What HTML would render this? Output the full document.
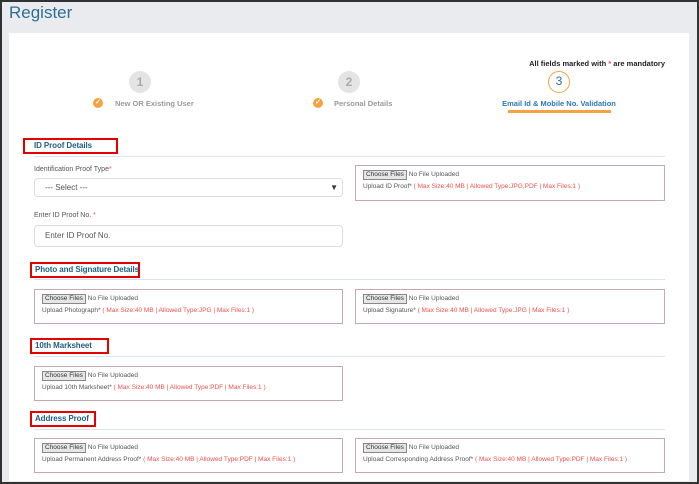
<!DOCTYPE html>
<html><head><meta charset="utf-8"><style>
*{box-sizing:border-box;margin:0;padding:0}
body{width:699px;height:484px;overflow:hidden;background:#fff;font-family:"Liberation Sans",Arial,sans-serif;position:relative}
.frame{position:absolute;left:0;top:0;width:699px;height:484px;border:2px solid #333;background:#eaebef}
.a{position:absolute;white-space:nowrap}
.title{left:9px;top:3px;font-size:17px;color:#2d6f93}
.card{left:9px;top:33px;width:680px;height:448px;background:#fff}
.circ{width:22px;height:22px;border-radius:50%;background:#e4e4e4;color:#aaa;font-size:12px;font-weight:bold;text-align:center;line-height:22px}
.chk{width:10px;height:10px;border-radius:50%;background:#f4a340;color:#fff;font-size:7px;text-align:center;line-height:10px;font-weight:bold}
.sl{font-size:7.5px;color:#999;font-weight:bold}
.h{border:2px solid #e50000;font-size:8px;font-weight:bold;color:#1f5f80;padding:0 0 0 9px;line-height:12px;letter-spacing:-0.1px}
.line{height:1px;background:#dde3ea}
.lab{font-size:7px;color:#555}
.inp{border:1px solid #ddd;border-radius:4px;font-size:8px;color:#555;padding-left:10px}
.up{border:1px solid #c7a9ad;font-size:6.5px;color:#555;padding:4px 0 0 7px;white-space:nowrap}
.btn{display:inline-block;border:1px solid #888;background:#e6e6e6;padding:0 2px;font-size:6.5px;color:#333;line-height:8px}
.r{color:#f0524f}
.up div{margin-top:3px}
</style></head><body>
<div class="frame"></div>
<div class="a title">Register</div>
<div class="a card"></div>

<div class="a" style="left:460px;top:59px;width:205px;text-align:right;font-size:7.5px;font-weight:bold;color:#222">All fields marked with <span class="r">*</span> are mandatory</div>

<div class="a circ" style="left:129px;top:71px">1</div>
<div class="a chk" style="left:93px;top:98px">✓</div>
<div class="a sl" style="left:115px;top:99px">New OR Existing User</div>
<div class="a circ" style="left:338px;top:71px">2</div>
<div class="a chk" style="left:313px;top:98px">✓</div>
<div class="a sl" style="left:334px;top:99px">Personal Details</div>
<div class="a circ" style="left:548px;top:71px;background:#fff;border:1.5px solid #f4a340;color:#2d6f93;font-weight:normal;line-height:19px">3</div>
<div class="a" style="left:500px;top:99px;width:118px;text-align:center;font-size:7.5px;font-weight:bold;color:#2b79b3">Email Id &amp; Mobile No. Validation</div>
<div class="a" style="left:508px;top:110px;width:103px;height:3px;background:#f4a340"></div>

<div class="a h" style="left:23px;top:138px;width:95px;height:16px">ID Proof Details</div>
<div class="a line" style="left:34px;top:156px;width:631px"></div>
<div class="a lab" style="left:34px;top:166px">Identification Proof Type<span class="r">*</span></div>
<div class="a inp" style="left:34px;top:178px;width:309px;height:19px;line-height:17px">--- Select ---<span style="position:absolute;right:4px;font-size:8px;color:#333">▼</span></div>
<div class="a up" style="left:355px;top:165px;width:310px;height:36px"><span class="btn">Choose Files</span> No File Uploaded<div>Upload ID Proof* <span class="r">( Max Size:40 MB | Allowed Type:JPG,PDF | Max Files:1 )</span></div></div>
<div class="a lab" style="left:34px;top:212px">Enter ID Proof No. <span class="r">*</span></div>
<div class="a inp" style="left:34px;top:225px;width:309px;height:22px;line-height:20px">Enter ID Proof No.</div>

<div class="a h" style="left:30px;top:262px;width:110px;height:16px;padding-left:3px">Photo and Signature Details</div>
<div class="a line" style="left:34px;top:279px;width:631px"></div>
<div class="a up" style="left:34px;top:289px;width:309px;height:35px"><span class="btn">Choose Files</span> No File Uploaded<div>Upload Photograph* <span class="r">( Max Size:40 MB | Allowed Type:JPG | Max Files:1 )</span></div></div>
<div class="a up" style="left:355px;top:289px;width:310px;height:35px"><span class="btn">Choose Files</span> No File Uploaded<div>Upload Signature* <span class="r">( Max Size:40 MB | Allowed Type:JPG | Max Files:1 )</span></div></div>

<div class="a h" style="left:30px;top:338px;width:79px;height:16px;padding-left:3px">10th Marksheet</div>
<div class="a line" style="left:34px;top:356px;width:631px"></div>
<div class="a up" style="left:34px;top:366px;width:309px;height:35px"><span class="btn">Choose Files</span> No File Uploaded<div>Upload 10th Marksheet* <span class="r">( Max Size:40 MB | Allowed Type:PDF | Max Files:1 )</span></div></div>

<div class="a h" style="left:30px;top:411px;width:66px;height:16px;padding-left:3px">Address Proof</div>
<div class="a line" style="left:34px;top:429px;width:631px"></div>
<div class="a up" style="left:34px;top:438px;width:309px;height:35px"><span class="btn">Choose Files</span> No File Uploaded<div>Upload Permanent Address Proof* <span class="r">( Max Size:40 MB | Allowed Type:PDF | Max Files:1 )</span></div></div>
<div class="a up" style="left:355px;top:438px;width:310px;height:35px"><span class="btn">Choose Files</span> No File Uploaded<div>Upload Corresponding Address Proof* <span class="r">( Max Size:40 MB | Allowed Type:PDF | Max Files:1 )</span></div></div>
</body></html>
